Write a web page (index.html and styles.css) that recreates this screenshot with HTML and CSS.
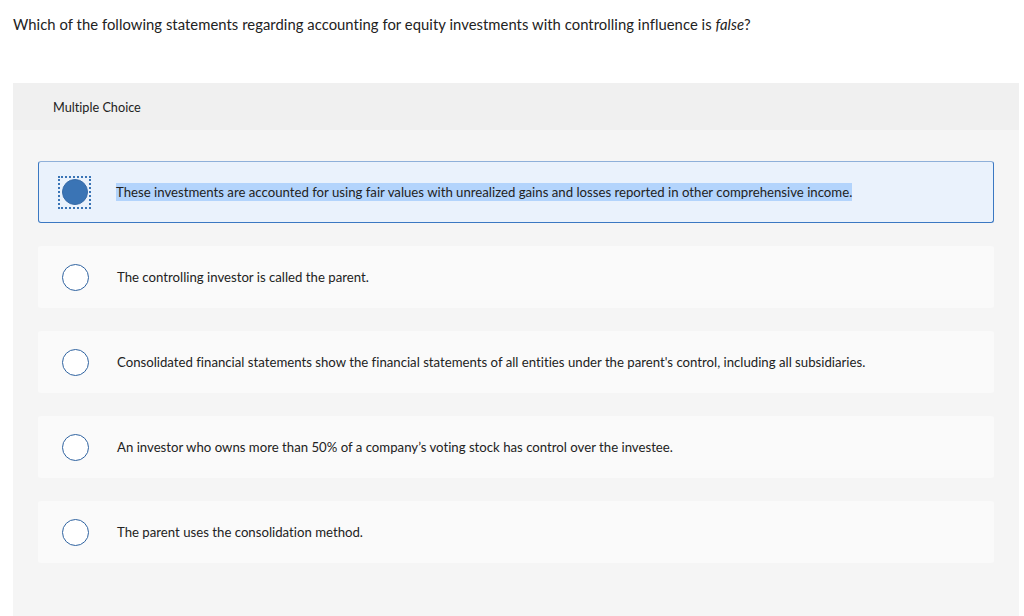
FILE: index.html
```html
<!DOCTYPE html>
<html>
<head>
<meta charset="utf-8">
<link rel="stylesheet" href="styles.css">
</head>
<body>
<div class="page">
  <p class="question">Which of the following statements regarding accounting for equity investments with controlling influence is <em>false</em>?</p>
  <div class="panel">
    <div class="panel-head">Multiple Choice</div>
    <div class="options">
      <div class="option selected">
        <span class="radio-focus"><span class="radio filled"></span></span>
        <span class="label"><span class="hl">These investments are accounted for using fair values with unrealized gains and losses reported in other comprehensive income.</span></span>
      </div>
      <div class="option">
        <span class="radio"></span>
        <span class="label">The controlling investor is called the parent.</span>
      </div>
      <div class="option">
        <span class="radio"></span>
        <span class="label">Consolidated financial statements show the financial statements of all entities under the parent's control, including all subsidiaries.</span>
      </div>
      <div class="option">
        <span class="radio"></span>
        <span class="label">An investor who owns more than 50% of a company’s voting stock has control over the investee.</span>
      </div>
      <div class="option">
        <span class="radio"></span>
        <span class="label">The parent uses the consolidation method.</span>
      </div>
    </div>
  </div>
</div>
</body>
</html>
```
FILE: styles.css
```css
* { box-sizing: border-box; }
html, body { margin: 0; padding: 0; background: #ffffff; }
body {
  font-family: "Lato", "Liberation Sans", sans-serif;
  font-variant-ligatures: none;
  color: #222222;
  width: 1024px;
  height: 616px;
  overflow: hidden;
}
.page { padding: 0 5px 0 13px; }
.question {
  margin: 0;
  padding-top: 15px;
  font-size: 14.8px;
  line-height: 18px;
  color: #222;
  letter-spacing: 0.05px;
}
.question em { font-style: italic; }
.panel {
  margin-top: 50px;
  background: #f5f5f5;
  border-radius: 3px 3px 0 0;
  height: 540px;
}
.panel-head {
  background: #f0f0f0;
  height: 47px;
  padding: 16px 0 0 40px;
  font-size: 12.7px;
  line-height: 16px;
  color: #222;
}
.options {
  padding: 31px 25px 0 25px;
  display: flex;
  flex-direction: column;
  gap: 23px;
}
.option {
  height: 62px;
  background: #fafafa;
  border-radius: 3px;
  display: flex;
  align-items: center;
  padding-left: 23px;
  border: 1px solid transparent;
}
.option.selected {
  background: #eaf2fc;
  border: 1px solid #3b78c2;
  border-top-color: #8fb0d9;
  padding-left: 19px;
}
.radio {
  width: 27px;
  height: 27px;
  border-radius: 50%;
  border: 1.3px solid #2f63a0;
  background: #fff;
  flex: none;
}
.radio.filled {
  background: #3a74b5;
  border-color: #356aa8;
  width: 26px;
  height: 26px;
}
.radio-focus {
  width: 33px;
  height: 33px;
  border: 2px dotted #3a74b5;
  display: flex;
  align-items: center;
  justify-content: center;
  flex: none;
}
.label {
  margin-left: 28px;
  font-size: 13.2px;
  line-height: 16px;
  color: #222;
}
.option.selected .label { margin-left: 25px; }
.hl { background: #b3d4fc; padding: 1px 0; }
```
